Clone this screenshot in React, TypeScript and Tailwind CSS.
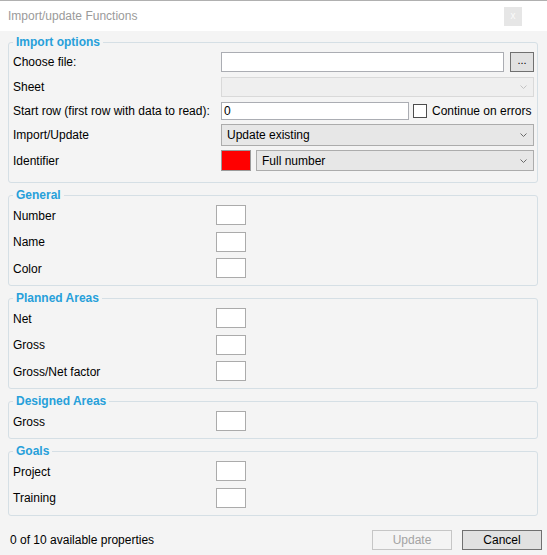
import type { ReactNode } from 'react'

function Chevron({ color = '#6a6a6a' }: { color?: string }) {
  return (
    <svg width="7" height="4" viewBox="0 0 7 4" fill="none">
      <path d="M0.5 0.5 L3.5 3.5 L6.5 0.5" stroke={color} strokeWidth="1" />
    </svg>
  )
}

function Select({ value, disabled }: { value?: string; disabled?: boolean }) {
  return (
    <div
      className={
        disabled
          ? 'flex h-full flex-1 items-center justify-end border border-[#d9d9d9] bg-[#efefef] px-[6px]'
          : 'flex h-full flex-1 items-center justify-between border border-[#acacac] bg-[#e7e7e7] pl-[5px] pr-[6px]'
      }
    >
      {value && <span>{value}</span>}
      <Chevron color={disabled ? '#c2c2c2' : '#6a6a6a'} />
    </div>
  )
}

function Group({ title, children }: { title: string; children: ReactNode }) {
  return (
    <fieldset className="rounded-[3px] border border-[#d5dfe5] pl-[4px] pr-[3px]">
      <legend className="px-[3px] text-[12px] font-bold leading-[14px] text-[#27a0da]">
        {title}
      </legend>
      {children}
    </fieldset>
  )
}

function Prop({ label }: { label: string }) {
  return (
    <div className="flex h-[20px] items-center">
      <span className="w-[203px] pt-[1px]">{label}</span>
      <div className="h-[20px] w-[30px] border border-[#ababab] bg-white" />
    </div>
  )
}

function PropGroup({ title, props }: { title: string; props: string[] }) {
  return (
    <Group title={title}>
      <div className="flex flex-col gap-[6.5px] pb-[7px] pt-[3px]">
        {props.map((p) => (
          <Prop key={p} label={p} />
        ))}
      </div>
    </Group>
  )
}

export default function App() {
  return (
    <div className="flex h-[555px] w-[547px] flex-col bg-[#f4f4f4] font-['Liberation_Sans',Arial,sans-serif] text-[12px] text-black">
      <div className="h-[1px] bg-[#b0b0b0]" />
      <div className="flex h-[30px] items-center justify-between bg-white pl-[8px] pr-[25px]">
        <span className="text-[12px] text-[#9a9a9a]">Import/update Functions</span>
        <div className="flex h-[19px] w-[18px] items-center justify-center bg-[#e6e6e6] text-[10px] leading-none text-[#fafafa]">
          x
        </div>
      </div>

      <div className="flex flex-col gap-[5px] pl-[8px] pr-[9px] pt-[4px]">
        <Group title="Import options">
          <div className="flex flex-col pb-[11px] pt-[3px]">
            <div className="flex h-[20px] items-center">
              <span className="w-[208px]">Choose file:</span>
              <div className="h-full flex-1 border border-[#abadb3] bg-white" />
              <div className="ml-[6px] flex h-full w-[24px] items-center justify-center border border-[#707070] bg-[#e1e1e1] pb-[4px] text-[11px]">
                ...
              </div>
            </div>
            <div className="mt-[5px] flex h-[20px] items-center">
              <span className="w-[208px]">Sheet</span>
              <Select disabled />
            </div>
            <div className="mt-[5px] flex h-[18px] items-center">
              <span className="w-[208px]">Start row (first row with data to read):</span>
              <div className="flex h-full w-[188px] items-center border border-[#abadb3] bg-white pl-[2px]">
                0
              </div>
              <div className="ml-[4px] h-[14px] w-[14px] border border-[#4d4d4d] bg-white" />
              <span className="ml-[5px]">Continue on errors</span>
            </div>
            <div className="mt-[4px] flex h-[22px] items-center">
              <span className="w-[208px]">Import/Update</span>
              <Select value="Update existing" />
            </div>
            <div className="mt-[4px] flex h-[21px] items-center">
              <span className="w-[208px]">Identifier</span>
              <div className="h-full w-[30px] border border-[#9a9a9a] bg-[#ff0000]" />
              <div className="ml-[5px] flex h-full flex-1">
                <Select value="Full number" />
              </div>
            </div>
          </div>
        </Group>

        <PropGroup title="General" props={['Number', 'Name', 'Color']} />
        <PropGroup title="Planned Areas" props={['Net', 'Gross', 'Gross/Net factor']} />
        <PropGroup title="Designed Areas" props={['Gross']} />
        <PropGroup title="Goals" props={['Project', 'Training']} />
      </div>

      <div className="mt-[14px] flex items-center pl-[10px] pr-[5px]">
        <span className="flex-1">0 of 10 available properties</span>
        <div className="flex h-[20px] w-[80px] items-center justify-center border border-[#c6c6c6] text-[#a3a3a3]">
          Update
        </div>
        <div className="ml-[10px] flex h-[20px] w-[80px] items-center justify-center border border-[#707070] bg-[#e1e1e1]">
          Cancel
        </div>
      </div>
    </div>
  )
}
